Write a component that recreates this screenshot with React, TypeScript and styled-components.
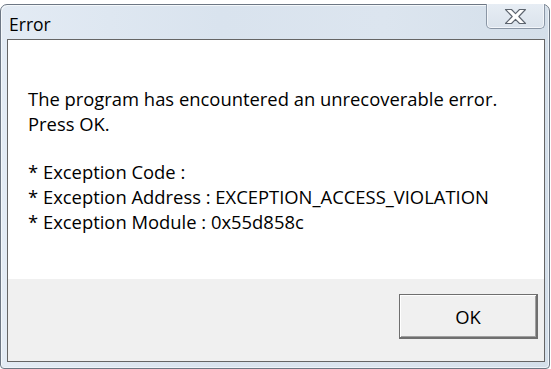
import styled, { createGlobalStyle } from 'styled-components'

const Global = createGlobalStyle`
  html, body {
    margin: 0;
    padding: 0;
    background: #ffffff;
    overflow: hidden;
  }
  body {
    font-family: 'Open Sans', 'Noto Sans', sans-serif;
  }
`

export default function App() {
  return (
    <>
      <Global />
      <Page>
        <Window>
          <TitleBar>
            <Title>Error</Title>
            <CloseButton aria-label="Close">
              <svg width="23" height="17" viewBox="0 0 23 17">
                <path
                  d="M1.5 1.5 H7.5 L11.5 5.6 L15.5 1.5 H21.5 L14.8 8.5 L21.5 15.5 H15.5 L11.5 11.4 L7.5 15.5 H1.5 L8.2 8.5 Z"
                  fill="#ffffff"
                  stroke="#5d646e"
                  strokeWidth="1.1"
                  strokeLinejoin="round"
                />
              </svg>
            </CloseButton>
          </TitleBar>
          <Client>
            <Message>
              <Line>The program has encountered an unrecoverable error.</Line>
              <Line>Press OK.</Line>
              <Gap />
              <Line>* Exception Code :</Line>
              <Line>* Exception Address : EXCEPTION_ACCESS_VIOLATION</Line>
              <Line>* Exception Module : 0x55d858c</Line>
            </Message>
            <Footer>
              <OkButton>OK</OkButton>
            </Footer>
          </Client>
        </Window>
      </Page>
    </>
  )
}

const Page = styled.div`
  width: 551px;
  height: 369px;
  padding-top: 4px;
  box-sizing: border-box;
`
const Window = styled.div`
  width: 550px;
  height: 365px;
  box-sizing: border-box;
  border: 1px solid #6d7784;
  border-radius: 7px 7px 4px 4px;
  background: linear-gradient(90deg, #e3ebf4 0%, #d9e3ee 40%, #dce5ef 70%, #d4dfea 100%);
  box-shadow: inset 1px 1px 0 #f4f8fb, inset -1px -1px 0 #eef3f8;
  display: flex;
  flex-direction: column;
`
const TitleBar = styled.div`
  height: 34px;
  display: flex;
  align-items: flex-start;
  justify-content: space-between;
  padding-left: 8px;
`
const Title = styled.div`
  font-size: 17.5px;
  line-height: 17px;
  color: #000;
  margin-top: 11px;
`
const CloseButton = styled.div`
  width: 59px;
  height: 25px;
  margin-right: 4px;
  margin-top: -1px;
  box-sizing: border-box;
  border: 1px solid #8a96a5;
  border-top: none;
  border-radius: 0 0 5px 5px;
  background: linear-gradient(180deg, #e7edf4 0%, #dbe3ec 100%);
  box-shadow: inset 1px 0 0 #f3f6fa, inset -1px 0 0 #f3f6fa, inset 0 -1px 0 #f3f6fa;
  display: flex;
  align-items: center;
  justify-content: center;
`
const Client = styled.div`
  flex: 1;
  margin: 0 4px 6px 6px;
  border: 1px solid #656565;
  display: flex;
  flex-direction: column;
  background: #ffffff;
`
const Message = styled.div`
  height: 239px;
  box-sizing: border-box;
  padding: 46px 20px 0 20px;
  background: #ffffff;
  color: #000;
  font-size: 18.4px;
`
const Line = styled.div`
  line-height: 25px;
  white-space: nowrap;
`
const Gap = styled.div`
  height: 23px;
`
const Footer = styled.div`
  flex: 1;
  background: #f0f0f0;
  display: flex;
  justify-content: flex-end;
  align-items: flex-start;
  padding: 15px 6px 0 0;
`
const OkButton = styled.div`
  width: 139px;
  height: 45px;
  box-sizing: border-box;
  border: 1px solid #6f6f6f;
  border-right-width: 2px;
  border-bottom-width: 2px;
  background: #f0f0f0;
  box-shadow: inset 1px 1px 0 #ffffff, inset -1px -1px 0 #a0a0a0;
  display: flex;
  align-items: center;
  justify-content: center;
  font-size: 18.4px;
  color: #000;
`
